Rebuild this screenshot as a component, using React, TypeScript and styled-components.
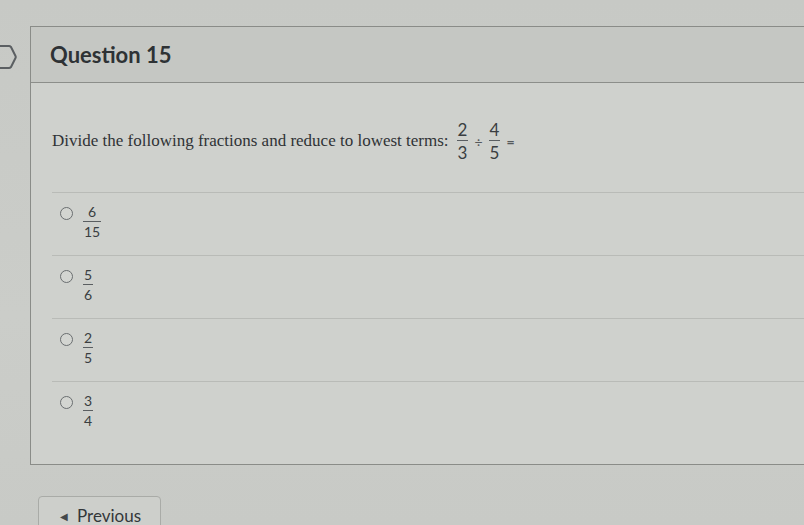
import React from 'react'
import styled, { createGlobalStyle } from 'styled-components'

const GlobalStyle = createGlobalStyle`
  html, body {
    margin: 0;
    padding: 0;
    background: #c9cbc7;
    overflow: hidden;
  }
`

const Page = styled.div`
  width: 804px;
  height: 525px;
  padding: 26px 0 0 30px;
  box-sizing: border-box;
  background: linear-gradient(180deg, #c7c9c5 0%, #cbcdc9 60%, #c8cac6 100%);
  overflow: hidden;
`

const Card = styled.div`
  position: relative;
  width: 800px;
  border: 1px solid #8a8c88;
  border-right: none;
  background: #cfd1cd;
`

const FlagMarker = styled.svg`
  position: absolute;
  left: -34px;
  top: 17px;
`

const Header = styled.div`
  height: 55px;
  display: flex;
  align-items: center;
  padding-left: 19px;
  background: #c5c7c3;
  border-bottom: 1px solid #8c8e8a;
`

const Title = styled.h2`
  margin: 0;
  font-family: Lato, 'Open Sans', sans-serif;
  font-weight: 700;
  font-size: 22px;
  color: #2e3235;
`

const Body = styled.div`
  padding: 38px 0 20px 21px;
`

const Question = styled.div`
  display: flex;
  align-items: center;
  gap: 7px;
  height: 40px;
  margin-bottom: 31px;
  font-family: 'Liberation Serif', 'Times New Roman', serif;
  font-size: 17px;
  color: #2f3336;
`

const MathExpr = styled.span`
  display: inline-flex;
  align-items: center;
  gap: 6px;
  margin-left: 1px;
`

const Frac = styled.span<{ $size?: number }>`
  display: inline-flex;
  flex-direction: column;
  align-items: center;
  font-family: Lato, 'DejaVu Sans', sans-serif;
  font-size: ${({ $size }) => $size ?? 17}px;
  line-height: 1;
  color: #3a3e41;
`

const Num = styled.span`
  padding: 0 1px 2px;
`

const Den = styled.span`
  align-self: stretch;
  text-align: center;
  padding: 3px 1px 0;
  border-top: 1px solid #5a5e61;
`

const Op = styled.span<{ $bold?: boolean }>`
  font-family: Lato, 'DejaVu Sans', sans-serif;
  font-size: 14px;
  font-weight: ${({ $bold }) => ($bold ? 900 : 400)};
  color: #55595c;
`

const Answers = styled.div`
  display: flex;
  flex-direction: column;
`

const AnswerRow = styled.label`
  display: flex;
  align-items: flex-start;
  gap: 10px;
  height: 63px;
  box-sizing: border-box;
  padding: 12px 0 0 8px;
  border-top: 1px solid #b9bbb7;
`

const Radio = styled.span`
  width: 11px;
  height: 11px;
  margin-top: 2px;
  border-radius: 50%;
  border: 1.5px solid #6a6e70;
  background: #d3d5d1;
  flex-shrink: 0;
`

const Footer = styled.div`
  padding: 31px 0 0 8px;
`

const PrevButton = styled.button`
  display: flex;
  align-items: flex-start;
  gap: 9px;
  width: 123px;
  height: 40px;
  padding: 8px 0 0 21px;
  box-sizing: border-box;
  border: 1px solid #a9aba7;
  border-radius: 4px;
  background: #cdcfcb;
  font-family: Lato, 'Open Sans', sans-serif;
  font-size: 17px;
  color: #33373a;
`

const Caret = styled.span`
  font-size: 10px;
  margin-top: 5px;
  color: #44484b;
`

const answers: [string, string][] = [
  ['6', '15'],
  ['5', '6'],
  ['2', '5'],
  ['3', '4'],
]

export default function App() {
  return (
    <>
      <GlobalStyle />
      <Page>
        <Card>
          <FlagMarker width="20" height="26" viewBox="0 0 20 26">
            <path
              d="M1 2 H12 Q13 2 14 3 L18.5 12 Q19 13 18.5 14 L14 23 Q13 24 12 24 H1"
              fill="none"
              stroke="#5b5f62"
              strokeWidth="2"
              strokeLinejoin="round"
            />
          </FlagMarker>
          <Header>
            <Title>Question 15</Title>
          </Header>
          <Body>
            <Question>
              Divide the following fractions and reduce to lowest terms:
              <MathExpr>
                <Frac>
                  <Num>2</Num>
                  <Den>3</Den>
                </Frac>
                <Op>÷</Op>
                <Frac>
                  <Num>4</Num>
                  <Den>5</Den>
                </Frac>
                <Op $bold>=</Op>
              </MathExpr>
            </Question>
            <Answers>
              {answers.map(([n, d]) => (
                <AnswerRow key={n + d}>
                  <Radio />
                  <Frac $size={14}>
                    <Num>{n}</Num>
                    <Den>{d}</Den>
                  </Frac>
                </AnswerRow>
              ))}
            </Answers>
          </Body>
        </Card>
        <Footer>
          <PrevButton>
            <Caret>◀</Caret>
            Previous
          </PrevButton>
        </Footer>
      </Page>
    </>
  )
}
